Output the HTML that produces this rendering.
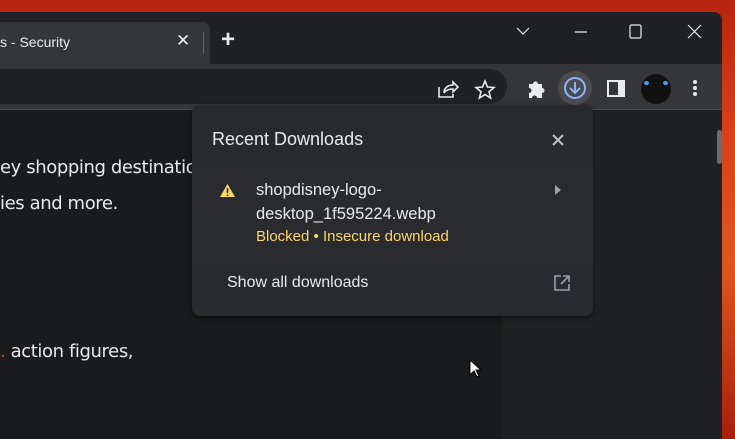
<!DOCTYPE html>
<html><head><style>
*{margin:0;padding:0;box-sizing:border-box}
body{width:735px;height:439px;overflow:hidden;position:relative;font-family:"Liberation Sans","DejaVu Sans",sans-serif;background:linear-gradient(180deg,#b8240f 0%,#d8401a 30%,#e0561c 60%,#a81e0e 100%)}
.abs{position:absolute}
.win{left:0;top:12px;width:722px;height:427px;background:#202124;border-top-right-radius:8px;overflow:hidden}
.tab{left:0;top:10px;width:210px;height:43px;background:#35363a;border-top-right-radius:8px}
.tb{left:0;top:52px;width:722px;height:46px;background:#35363a;border-bottom:1px solid #4a4b4f}
.omni{left:-20px;top:57px;width:527px;height:35px;background:#202124;border-radius:18px}
.content{left:0;top:98px;width:502px;height:329px;background:#1a1b1c}
.right{left:502px;top:98px;width:220px;height:329px;background:#202124}
.txt{color:#e8eaed;font-size:18px;font-family:"DejaVu Sans",sans-serif;letter-spacing:-0.4px}
.pop{left:192px;top:105px;width:401px;height:211px;background:#292a2d;border-radius:8px;box-shadow:0 2px 6px rgba(0,0,0,.5)}
</style></head><body>
<div class="abs win">
 <div class="abs tab"></div>
 <div class="abs" style="left:0;top:22px;color:#e8eaed;font-size:14px">s - Security</div>
 <div class="abs" style="left:176px;top:19px;color:#e8eaed;font-size:17px">✕</div>
 <div class="abs" style="left:203px;top:20px;width:1px;height:22px;background:#5f6368"></div>
 <div class="abs" style="left:221px;top:14px;color:#e8eaed;font-size:24px;font-weight:bold">+</div>
 <svg class="abs" style="left:510px;top:10px" width="200" height="20" fill="none" stroke="#e8eaed" stroke-width="1.2">
  <path d="M7 6l6 6 6-6"/>
  <path d="M65 10h12"/>
  <rect x="120" y="3" width="11" height="13" rx="1.5"/>
  <path d="M178 3l13 13M191 3l-13 13"/>
 </svg>
 <div class="abs tb"></div>
 <div class="abs omni"></div>
 <svg class="abs" style="left:436px;top:66px" width="60" height="22" fill="none" stroke="#e8eaed" stroke-width="1.6">
  <path d="M3 9v10h14v-3M8 15c0-5 4-8 9-8V4l5 5-5 5v-3c-4 0-7 1-9 4"/>
  <path d="M49 3l2.5 6 6.5.5-5 4.2 1.6 6.3-5.6-3.4-5.6 3.4 1.6-6.3-5-4.2 6.5-.5z"/>
 </svg>
 <svg class="abs" style="left:526px;top:66px" width="20" height="22" fill="#e8eaed"><path d="M3 6h4a2.5 2.5 0 015 0h4v4a2.5 2.5 0 010 5v5h-5a2.5 2.5 0 00-5 0H3v-5a2.5 2.5 0 000-5z"/></svg>
 <div class="abs" style="left:558px;top:59px;width:34px;height:34px;border-radius:50%;background:#4a4c50"></div>
 <svg class="abs" style="left:563px;top:64px" width="24" height="24" fill="none" stroke="#8ab4f8" stroke-width="2"><circle cx="12" cy="12" r="10"/><path d="M12 6v11M7 12l5 5 5-5"/></svg>
 <div class="abs" style="left:607px;top:68px;width:18px;height:17px;border:2px solid #e8eaed;border-right:7px solid #e8eaed"></div>
 <div class="abs" style="left:641px;top:62px;width:30px;height:30px;border-radius:50%;background:#111"></div>
 <div class="abs" style="left:644px;top:69px;width:5px;height:4px;border-radius:50%;background:#3aa0ff"></div>
 <div class="abs" style="left:663px;top:69px;width:5px;height:4px;border-radius:50%;background:#3aa0ff"></div>
 <div class="abs" style="left:693px;top:68px;width:4px;height:4px;border-radius:50%;background:#e8eaed;box-shadow:0 6px 0 #e8eaed,0 12px 0 #e8eaed"></div>
 <div class="abs content"></div>
 <div class="abs right"></div>
 <div class="abs" style="left:717px;top:118px;width:5px;height:34px;border-radius:3px;background:#6b6c70"></div>
 <div class="abs txt" style="left:0;top:145px">ey shopping destinatio</div>
 <div class="abs txt" style="left:0;top:181px">ies and more.</div>
 <div class="abs txt" style="left:0;top:329px"><span style="color:#e34040">.</span> action figures,</div>
 <svg class="abs" style="left:469px;top:347px" width="14" height="20"><path d="M1 1v15l4-4 3 6 2-1-3-6h5z" fill="#fff" stroke="#000"/></svg>
</div>
<div class="abs pop">
 <div class="abs" style="left:20px;top:24px;color:#e8eaed;font-size:18px">Recent Downloads</div>
 <svg class="abs" style="left:360px;top:29px" width="12" height="12" stroke="#bdc1c6" stroke-width="2"><path d="M1 1l10 10M11 1L1 11"/></svg>
 <div class="abs" style="left:0;top:60px;width:401px;height:100px;background:#2a2b2e"></div>
 <svg class="abs" style="left:28px;top:79px" width="15" height="13"><path d="M7.5 0L15 13H0z" fill="#fdd663"/><path d="M7.5 4v5M7.5 10.5v1.5" stroke="#292a2d" stroke-width="1.6"/></svg>
 <div class="abs" style="left:64px;top:73px;color:#e8eaed;font-size:16.5px;line-height:24px">shopdisney-logo-<br>desktop_1f595224.webp</div>
 <div class="abs" style="left:64px;top:123px;color:#fdd663;font-size:15px">Blocked • Insecure download</div>
 <svg class="abs" style="left:362px;top:79px" width="8" height="12"><path d="M1 1l6 5-6 5z" fill="#9aa0a6"/></svg>
 <div class="abs" style="left:35px;top:169px;color:#e8eaed;font-size:16px">Show all downloads</div>
 <svg class="abs" style="left:362px;top:170px" width="16" height="16" fill="none" stroke="#9aa0a6" stroke-width="1.6"><path d="M7 1H1v14h14V9M9 1h6v6M15 1L7 9"/></svg>
</div>
</body></html>
